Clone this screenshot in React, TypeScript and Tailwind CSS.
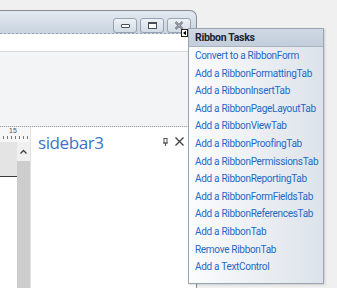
const tasks = [
  "Convert to a RibbonForm",
  "Add a RibbonFormattingTab",
  "Add a RibbonInsertTab",
  "Add a RibbonPageLayoutTab",
  "Add a RibbonViewTab",
  "Add a RibbonProofingTab",
  "Add a RibbonPermissionsTab",
  "Add a RibbonReportingTab",
  "Add a RibbonFormFieldsTab",
  "Add a RibbonReferencesTab",
  "Add a RibbonTab",
  "Remove RibbonTab",
  "Add a TextControl",
];

const CaptionButton = ({ children }: { children: React.ReactNode }) => (
  <div className="w-[24px] h-[15px] rounded-[3px] border border-[#97a3b2] bg-gradient-to-b from-[#eef2f6] to-[#d2dbe5] flex items-center justify-center">
    {children}
  </div>
);

const App = () => {
  return (
    <div className="relative w-[337px] h-[288px] overflow-hidden bg-[#f0f0f0] font-['Open_Sans',sans-serif]">
      <div className="pt-[10px] w-[197px] h-full flex flex-col">
        {/* title bar */}
        <div className="h-[23px] shrink-0 rounded-tr-[7px] border-t border-r border-[#858c96] bg-gradient-to-b from-[#e3e9f0] to-[#c9d4e0] flex justify-end gap-[3px] pt-[7px] pr-[5px]">
          <CaptionButton>
            <div className="w-[9px] h-[4px] rounded-[1px] border border-[#4a4f58] bg-white" />
          </CaptionButton>
          <CaptionButton>
            <div className="w-[9px] h-[7px] border border-[#4a4f58] border-t-[2px] bg-white" />
          </CaptionButton>
          <CaptionButton>
            <svg width="10" height="9" viewBox="0 0 10 9">
              <path d="M1.5 1 L8.5 8 M8.5 1 L1.5 8" stroke="#4a4f58" strokeWidth="2.2" />
              <path d="M1.5 1 L8.5 8 M8.5 1 L1.5 8" stroke="#ffffff" strokeWidth="0.8" />
            </svg>
          </CaptionButton>
        </div>
        <div className="flex-1 flex flex-col border-r border-[#858c96]">
          <div className="h-[1px] shrink-0 bg-[repeating-linear-gradient(90deg,#8ea1b6_0_2px,#c9d3de_2px_4px)]" />
          <div className="h-[18px] shrink-0 bg-white border-b border-[#dadada]" />
          <div className="h-[74px] shrink-0 bg-[#f3f4f6]" />
          <div className="h-[1px] shrink-0 bg-[repeating-linear-gradient(90deg,#a4a4a4_0_1px,#e2e2e2_1px_2px)]" />
          <div className="flex-1 flex">
            {/* document column */}
            <div className="w-[30px] flex flex-col">
              <div className="h-[15px] bg-[#f7f7f7] relative">
                <span className="absolute left-[9px] top-[0px] text-[7px] leading-none text-[#555] font-['Liberation_Sans',sans-serif]">15</span>
                <div className="absolute left-0 right-0 top-[9px] h-[3px] bg-[repeating-linear-gradient(90deg,transparent_0_3px,#777_3px_4px)]" />
              </div>
              <div className="flex-1 flex">
                <div className="w-[17px] flex flex-col">
                  <div className="h-[35px] bg-[#e4e4e4] border-b border-[#3c3c3c]" />
                  <div className="flex-1 bg-white" />
                </div>
                <div className="w-[13px] flex flex-col">
                  <div className="h-[19px] bg-[#f0f0f0] flex items-center justify-center">
                    <svg width="7" height="5" viewBox="0 0 7 5">
                      <path d="M0.5 4.5 L3.5 1.5 L6.5 4.5" stroke="#404040" strokeWidth="1.4" fill="none" />
                    </svg>
                  </div>
                  <div className="flex-1 bg-[#cdcdcd]" />
                </div>
              </div>
            </div>
            <div className="w-[1px] bg-[#e2e2e2]" />
            {/* sidebar panel */}
            <div className="flex-1 bg-white">
              <div className="flex items-start justify-between pl-[7px] pr-[12px] pt-[4px]">
                <span className="text-[17px] leading-[24px] tracking-[-0.4px] text-[#3b73c6]">sidebar3</span>
                <div className="flex items-center gap-[7px] pt-[6px]">
                  <svg width="5" height="8" viewBox="0 0 5 8">
                    <path d="M0.5 0.5 H4.5 M1 0.5 V5 H4 V0.5 M0 5 H5 M2.5 5 V8" stroke="#555" strokeWidth="1" fill="none" />
                  </svg>
                  <svg width="9" height="9" viewBox="0 0 9 9">
                    <path d="M0.5 0.5 L8.5 8.5 M8.5 0.5 L0.5 8.5" stroke="#444" strokeWidth="1.4" />
                  </svg>
                </div>
              </div>
            </div>
          </div>
        </div>
      </div>

      {/* smart tag glyph */}
      <svg className="absolute left-[181px] top-[29px]" width="7" height="8" viewBox="0 0 7 8">
        <rect x="0.5" y="0.5" width="6" height="7" fill="#fff" stroke="#222" />
        <path d="M2 4 L5 1.8 L5 6.2 Z" fill="#000" />
      </svg>

      {/* Ribbon Tasks popup */}
      <div className="absolute left-[188px] top-[28px] w-[136px] h-[256px] border border-[#9ba4b1] bg-gradient-to-r from-[#fbfcfd] to-[#dde3eb] shadow-[1px_1px_2px_rgba(0,0,0,0.15)] font-['Roboto',sans-serif]">
        <div className="h-[18px] bg-gradient-to-b from-[#cfd8e3] to-[#c3cedb] border-b border-[#aab3c0] pl-[6px] text-[10.5px] leading-[17px] font-bold tracking-[-0.3px] text-[#1b2533]">
          Ribbon Tasks
        </div>
        <div className="pl-[6px]">
          {tasks.map((t) => (
            <div key={t} className="text-[10px] leading-[17.6px] tracking-[-0.3px] text-[#1e69c6] whitespace-nowrap">
              {t}
            </div>
          ))}
        </div>
      </div>
    </div>
  );
};

export default App;
